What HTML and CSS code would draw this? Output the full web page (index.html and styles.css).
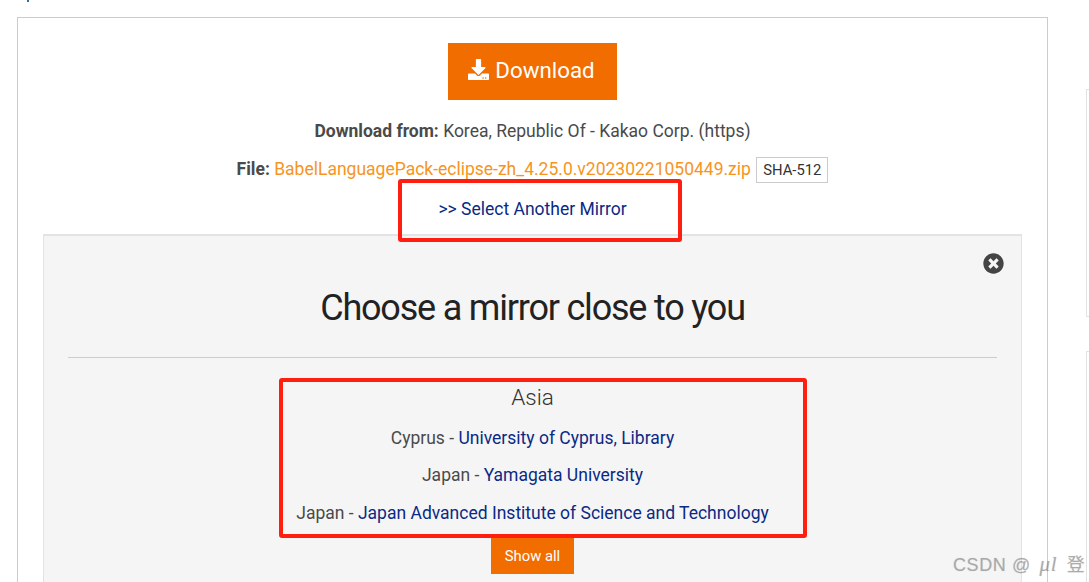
FILE: index.html
```html
<!DOCTYPE html>
<html lang="en">
<head>
  <meta charset="UTF-8" />
  <title>Eclipse downloads - Select a mirror</title>
  <link rel="stylesheet" href="styles.css">
</head>
<body>

  <div class="crumb-tail"></div>

  <div class="page">
    <main class="download-box">
      <a class="btn-download" href="#">
        <svg class="icon-download" viewBox="0 0 512 512"><path fill="currentColor" d="M216 0h80c13.3 0 24 10.7 24 24v168h87.7c17.8 0 26.7 21.5 14.1 34.1L269.7 378.3c-7.5 7.5-19.8 7.5-27.3 0L90.1 226.1c-12.6-12.6-3.7-34.1 14.1-34.1H192V24c0-13.3 10.7-24 24-24zm296 376v112c0 13.3-10.7 24-24 24H24c-13.3 0-24-10.7-24-24V376c0-13.3 10.7-24 24-24h146.7l49 49c20.1 20.1 52.5 20.1 72.6 0l49-49H488c13.3 0 24 10.7 24 24zm-124 88c0-11-9-20-20-20s-20 9-20 20 9 20 20 20 20-9 20-20zm64 0c0-11-9-20-20-20s-20 9-20 20 9 20 20 20 20-9 20-20z"/></svg>
        Download
      </a>

      <p class="info from"><b>Download from:</b> Korea, Republic Of - Kakao Corp. (https)</p>
      <p class="info file">
        <b>File:</b> <a class="file-link" href="#">BabelLanguagePack-eclipse-zh_4.25.0.v20230221050449.zip</a>
        <span class="sha">SHA-512</span>
      </p>
      <p class="info another"><a class="blue" href="#">&gt;&gt; Select Another Mirror</a></p>

      <section class="mirrors">
        <a class="close" href="#">
          <svg viewBox="0 0 512 512"><path fill="currentColor" d="M256 8C119 8 8 119 8 256s111 248 248 248 248-111 248-248S393 8 256 8zm121.6 313.1c4.7 4.7 4.7 12.3 0 17L338 377.6c-4.7 4.7-12.3 4.7-17 0L256 312l-65.1 65.6c-4.7 4.7-12.3 4.7-17 0L134.4 338c-4.7-4.7-4.7-12.3 0-17l65.6-65-65.6-65.1c-4.7-4.7-4.7-12.3 0-17l39.6-39.6c4.7-4.7 12.3-4.7 17 0l65 65.7 65.1-65.6c4.7-4.7 12.3-4.7 17 0l39.6 39.6c4.7 4.7 4.7 12.3 0 17L312 256l65.6 65.1z"/></svg>
        </a>
        <h1>Choose a mirror close to you</h1>
        <hr>
        <h2>Asia</h2>
        <p class="mirror">Cyprus - <a class="blue" href="#">University of Cyprus, Library</a></p>
        <p class="mirror">Japan - <a class="blue" href="#">Yamagata University</a></p>
        <p class="mirror">Japan - <a class="blue" href="#">Japan Advanced Institute of Science and Technology</a></p>
        <a class="btn-show" href="#">Show all</a>
      </section>
    </main>

    <aside class="side">
      <div class="side-box first"></div>
      <div class="side-box second"></div>
    </aside>
  </div>

  <!-- annotations pasted on top of the screenshot -->
  <div class="mark mark-select"></div>
  <div class="mark mark-asia"></div>
  <div class="watermark">CSDN @ <i>&#956;l</i> 登</div>

</body>
</html>
```

FILE: styles.css
```css
* {
  box-sizing: border-box;
}

html, body {
  height: 582px;
  overflow: hidden;
}

body {
  margin: 0;
  position: relative;
  background: #fff;
  color: #4a4a4a;
  font-family: Roboto, sans-serif;
  font-size: 17.5px;
}

a {
  text-decoration: none;
}

p {
  margin: 0;
}

.crumb-tail {
  width: 2px;
  height: 2px;
  margin-left: 27px;
  background: #2a6fb0;
}

.page {
  display: flex;
  gap: 38px;
  margin: 15px 0 0 17px;
}

.download-box {
  flex: 0 0 1031px;
  height: 700px;
  padding: 25px;
  border: 1px solid #ccc;
  text-align: center;
}

.btn-download {
  display: inline-flex;
  align-items: center;
  justify-content: center;
  gap: 6px;
  width: 169px;
  height: 57px;
  padding: 0 2px 4px 0;
  background: #f26d00;
  color: #fff;
  font-size: 22.3px;
}

.icon-download {
  width: 21px;
  height: 21px;
  margin-top: -1px;
}

.info {
  line-height: 24px;
}

.from {
  margin-top: 19px;
}

.file {
  margin-top: 14px;
  height: 26px;
}

.another {
  margin-top: 14px;
}

.file-link {
  color: #f7941e;
}

.sha {
  display: inline-block;
  margin-left: 1px;
  padding: 0 6px;
  height: 26px;
  line-height: 24px;
  border: 1px solid #ccc;
  background: #fff;
  color: #333;
  font-size: 14.8px;
  vertical-align: middle;
}

.blue {
  color: #0a2a85;
}

.mirrors {
  position: relative;
  margin-top: 13px;
  height: 500px;
  padding: 0 24px;
  background: #f5f5f5;
  border: 1px solid #e3e3e3;
  border-top-width: 2px;
}

.close {
  position: absolute;
  top: 17px;
  right: 17px;
  width: 21px;
  height: 21px;
  color: #444;
}

.close svg {
  display: block;
  width: 100%;
  height: 100%;
}

h1 {
  margin: 47px 0 0;
  font-size: 36px;
  font-weight: 400;
  line-height: 50px;
  letter-spacing: -1.2px;
  color: #222;
}

hr {
  margin: 24px 0 0;
  border: 0;
  border-top: 1px solid #ccc;
}

h2 {
  margin: 24px 0 0;
  font-size: 22.5px;
  font-weight: 300;
  line-height: 30px;
  color: #333;
}

.mirror {
  margin-top: 13.5px;
  line-height: 24px;
}

.btn-show {
  display: inline-flex;
  align-items: center;
  justify-content: center;
  width: 83px;
  height: 36px;
  margin-top: 13px;
  background: #f26d00;
  color: #fff;
  font-size: 14.8px;
}

.side {
  flex: 1;
}

.side-box {
  border: 1px solid #e2e2e2;
  border-right: 0;
}

.first {
  height: 228px;
  margin-top: 72px;
}

.second {
  height: 300px;
  margin-top: 34px;
}

.mark {
  position: absolute;
  border: 4px solid #ff1f10;
  border-radius: 3px;
}

.mark-select {
  left: 398px;
  top: 179px;
  width: 284px;
  height: 63px;
}

.mark-asia {
  left: 279px;
  top: 378px;
  width: 528px;
  height: 160px;
}

.watermark {
  position: absolute;
  left: 953px;
  top: 552px;
  font-family: "Liberation Sans", "Noto Sans CJK SC", sans-serif;
  font-size: 18px;
  line-height: 24px;
  letter-spacing: 0.6px;
  white-space: nowrap;
  color: rgba(130, 130, 130, 0.5);
  text-shadow: 0 0 1px rgba(130, 130, 130, 0.4);
}

.watermark i {
  margin: 0 4px 0 3px;
  font-family: "Liberation Serif", serif;
  font-size: 21px;
}
```
